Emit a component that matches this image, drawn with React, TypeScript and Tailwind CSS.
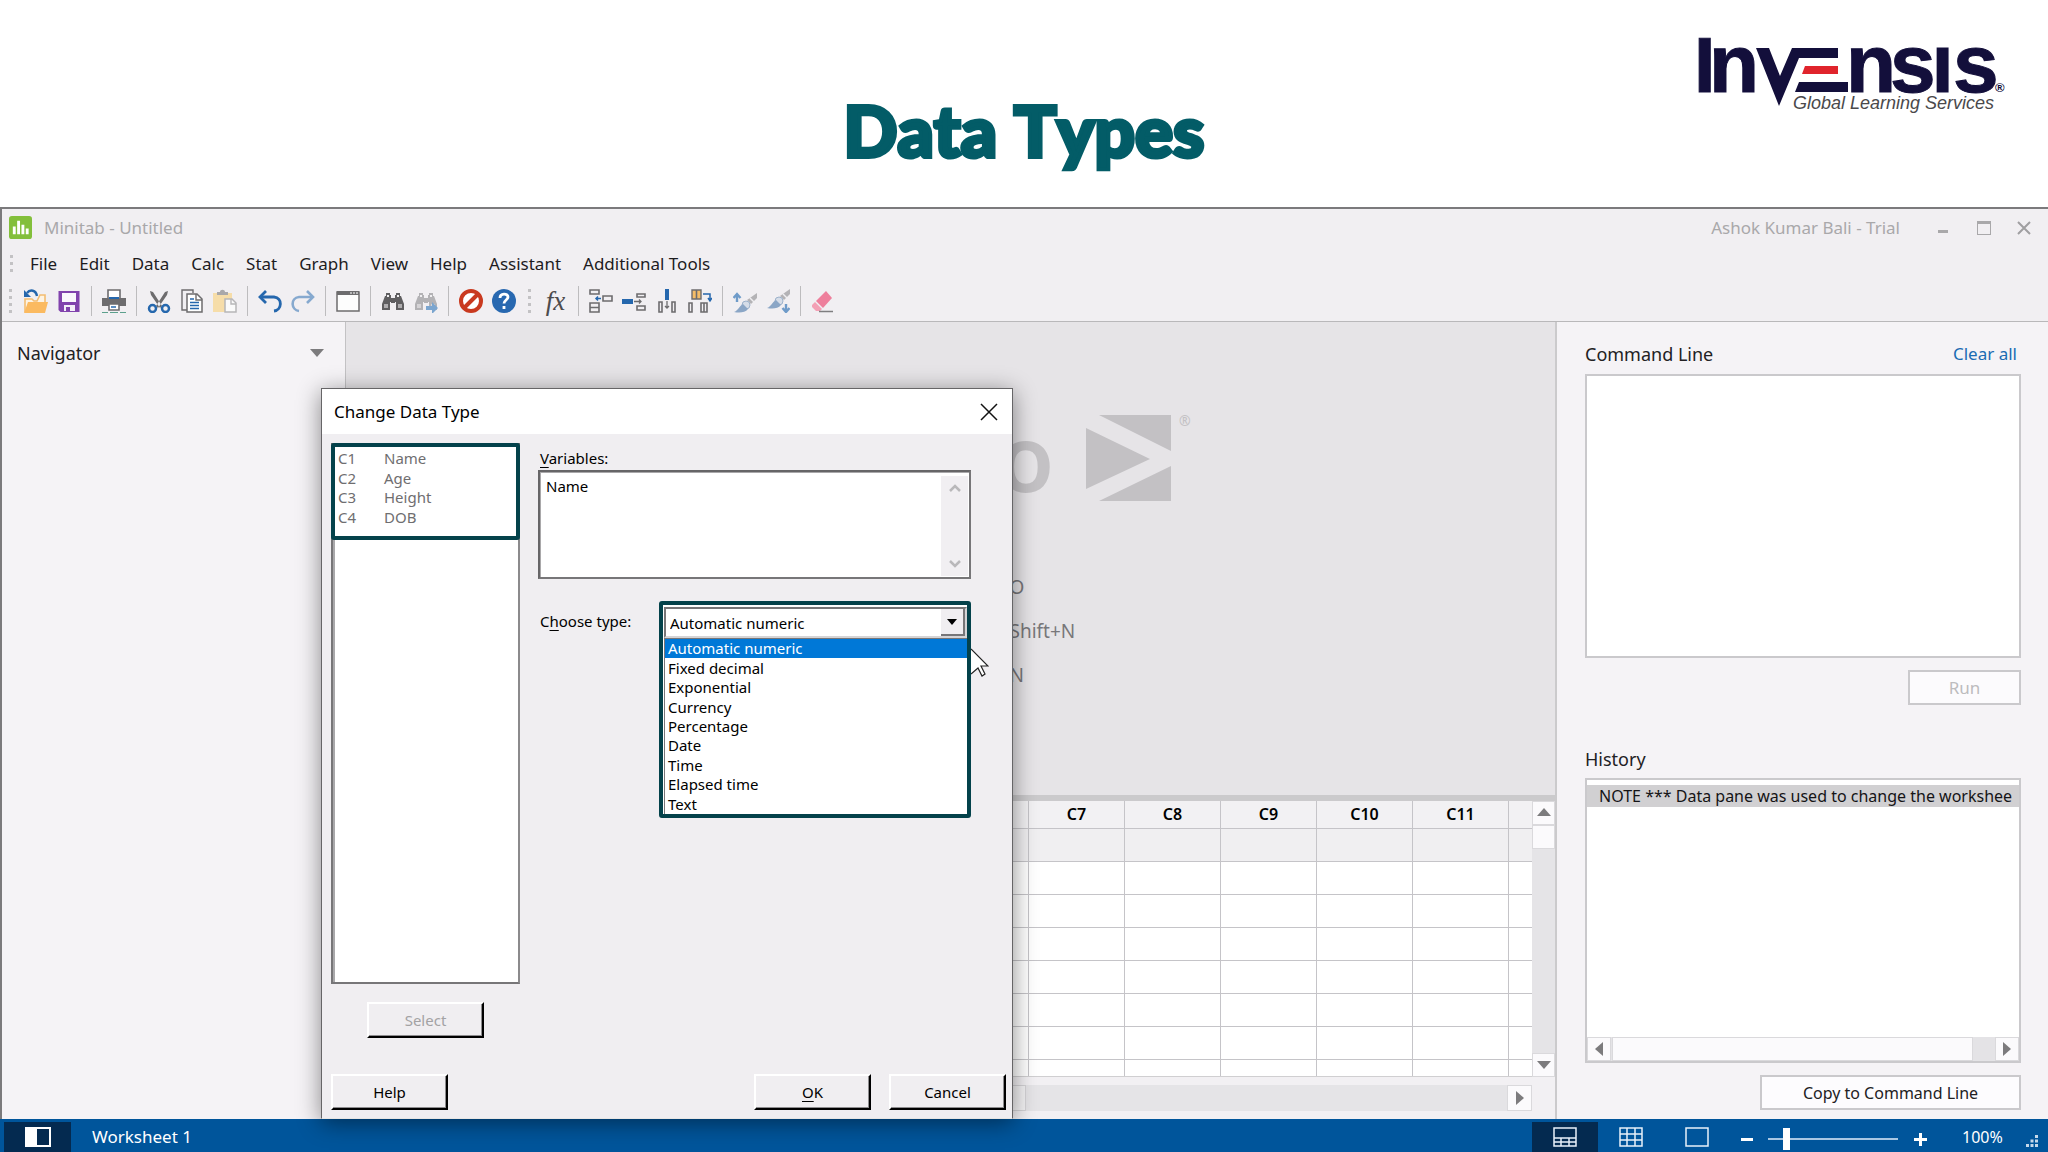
import React from "react";

const cx = (...parts: (string | false | undefined)[]) => parts.filter(Boolean).join(" ");

function Svg({ children, className = "size-6" }: { children: React.ReactNode; className?: string }) {
  return (
    <svg viewBox="0 0 24 24" className={cx("block shrink-0", className)} fill="none" aria-hidden="true">
      {children}
    </svg>
  );
}

const G = "#6d6c6e";
const B = "#2567ad";

const Binoculars = ({ color }: { color: string }) => (
  <g fill={color}>
    <path d="M5 4h4v2h1v7H9v8H1v-6l3-8h1zM19 4h-4v2h-1v7h1v8h8v-6l-3-8h-1z" />
    <path d="M10 9h4v5h-4z" />
    <path d="M3 15h4v4H3zM17 15h4v4h-4z" fill="#f0eff1" fillOpacity="0.55" />
    <path d="M6 6h2v2H6zM16 6h2v2h-2z" fill="#f0eff1" />
  </g>
);

const Brush = () => (
  <>
    <path d="M24 4v5l-6 6-4-4z" fill="#b4b3b6" />
    <path d="M17 9l4 4" stroke="#f0eff1" strokeWidth="1.5" />
    <circle cx="13" cy="16" r="4" fill="#d6dde8" stroke="#9db2cb" />
    <path d="M1 23c4-1 5-6 9-8l5 5c-3 4-9 4-14 3z" fill="#8ba6c6" />
  </>
);

const icons: Record<string, React.ReactNode> = {
  Open: (
    <Svg>
      <path d="M1 23V10h7l2 2h3l3-6h5v8" stroke="#f3bd72" strokeWidth="1.6" fill="#fdf3e3" />
      <path d="M0 24l4-11h20l-3 11z" fill="#fbba60" />
      <path d="M13 7c-1-6-7-7-10-3" stroke={B} strokeWidth="2.4" />
      <path d="M0 1v7h7z" fill={B} />
    </Svg>
  ),
  Save: (
    <Svg>
      <path d="M1.500 2h21v21h-19l-2-2z" fill="#8143ad" />
      <path d="M5 4h14v9H5z" fill="#faf7fc" />
      <path d="M7 16h11v6H7z" fill="#f4eff8" />
      <path d="M9 18h4v4H9z" fill="#8143ad" />
    </Svg>
  ),
  Print: (
    <Svg>
      <path d="M0 9h24v8H0z" fill={G} />
      <path d="M6 1h12v9H6z" fill="#fff" stroke={G} strokeWidth="1.600" />
      <path d="M7 8h10v2H7z" fill={B} />
      <path d="M7 15h10v6H7z" fill="#fff" stroke={G} strokeWidth="1.600" />
      <path d="M9 18h5" stroke={B} strokeWidth="1.500" />
      <path d="M0 23.500h6m2 0h8m2 0h6" stroke="#5ca08d" />
    </Svg>
  ),
  Cut: (
    <Svg>
      <path d="M3 2l3 1 9 14-2 2L4 6zM21 2l-3 1-9 14 2 2L20 6z" fill={G} />
      <circle cx="5.500" cy="19.500" r="3.500" stroke={B} strokeWidth="2.500" />
      <circle cx="18.500" cy="19.500" r="3.500" stroke={B} strokeWidth="2.500" />
    </Svg>
  ),
  Copy: (
    <Svg>
      <path d="M7 21H2V1h11v3" stroke={G} strokeWidth="1.400" />
      <path d="M7 5h10l5 5v13H7z" fill="#fff" stroke={G} strokeWidth="1.500" />
      <path d="M16 5v6h6" stroke={G} strokeWidth="1.400" />
      <path d="M10 10h4m-4 3.500h9m-9 3h9m-9 3h9" stroke={B} strokeWidth="1.400" />
    </Svg>
  ),
  Paste: (
    <Svg>
      <path d="M0 4h19v6h-6v13H0z" fill="#f6dda9" />
      <path d="M4 3h3c0-3 5-3 5 0h3v3H4z" fill="#a9a8aa" />
      <path d="M12 10h7l4 4v9H12z" fill="#fafafa" stroke="#b7b6b8" strokeWidth="1.500" />
      <path d="M18 10v5h5" stroke="#b7b6b8" strokeWidth="1.400" />
    </Svg>
  ),
  Undo: (
    <Svg>
      <path d="M2 8h14c9 1 8 13 0 14" stroke={B} strokeWidth="2.800" />
      <path d="M8 2L2 8l6 6" stroke={B} strokeWidth="2.800" />
    </Svg>
  ),
  Redo: (
    <Svg>
      <path d="M22 8H8c-9 1-8 13 0 14" stroke="#86a9cf" strokeWidth="2.600" />
      <path d="M16 2l6 6-6 6" stroke="#86a9cf" strokeWidth="2.600" />
    </Svg>
  ),
  "Show window": (
    <Svg>
      <path d="M1 3h22v19H1z" fill="#fdfdfd" stroke={G} strokeWidth="1.500" />
      <path d="M1 2h22v4H1z" fill={G} />
      <path d="M14 4h2m1 0h2m1 0h2" stroke="#fff" />
    </Svg>
  ),
  Find: <Svg><Binoculars color="#5f5e60" /></Svg>,
  "Find next": (
    <Svg>
      <Binoculars color="#b3b2b5" />
      <path d="M12 17h6v-4l6 6-6 6v-4h-6z" fill="#7ba5cf" />
    </Svg>
  ),
  Stop: (
    <Svg>
      <circle cx="12" cy="12" r="10" stroke="#c9391f" strokeWidth="4" fill="#fff" />
      <path d="M5 19L19 5" stroke="#c9391f" strokeWidth="4" />
    </Svg>
  ),
  "About help": (
    <Svg>
      <circle cx="12" cy="12" r="12" fill="#2868b0" />
      <path d="M8 9c0-5 8-5 8-1 0 3-4 3-4 6.500M12 17v3" stroke="#fff" strokeWidth="2.800" />
    </Svg>
  ),
  Formula: <span className="font-['Liberation_Serif'] text-[27px] leading-6 text-[#4c4b4d] italic">fx</span>,
  "Insert cells": (
    <Svg>
      <path d="M1 1h9v4H1zM1 14h9v9H1zM1 18.500h9M14 7h9v5h-9z" stroke={G} strokeWidth="1.600" />
      <path d="M12 9.500H7m2-2l-2 2 2 2" stroke={B} strokeWidth="1.500" />
    </Svg>
  ),
  "Insert row": (
    <Svg>
      <path d="M0 10h11v5H0z" fill={B} />
      <path d="M15 5h8v3h-8zM15 17h8v4h-8z" stroke={G} strokeWidth="1.600" />
      <path d="M12 12.500h7m-2-2l2 2-2 2" stroke={G} strokeWidth="1.300" />
    </Svg>
  ),
  "Insert column": (
    <Svg>
      <path d="M10 0h4v11h-4z" fill={B} />
      <path d="M4 13h3v10H4zM17 13h3v10h-3z" stroke={G} strokeWidth="1.600" />
      <path d="M12 12v7m-2-2l2 2 2-2" stroke={G} strokeWidth="1.300" />
    </Svg>
  ),
  "Move columns": (
    <Svg>
      <path d="M4 1h9v9H4z" fill="#f5bd68" stroke={G} strokeWidth="1.400" />
      <path d="M8.500 1v9M1 14h3v9H1zM13 14h6v9h-6zM16 14v9" stroke={G} strokeWidth="1.600" />
      <path d="M15 5h7v6m-2-2l2 3 2-3" stroke={B} strokeWidth="1.500" />
    </Svg>
  ),
  "Previous brushed row": (
    <Svg>
      <Brush />
      <path d="M4 13V6M0.500 9L4 5l3.500 4" stroke="#6f9bc9" strokeWidth="2.400" />
    </Svg>
  ),
  "Next brushed row": (
    <Svg>
      <g transform="translate(0 -4)"><Brush /></g>
      <path d="M20 15v7m-3.500-3l3.500 4 3.500-4" stroke="#6f9bc9" strokeWidth="2.400" />
    </Svg>
  ),
  Erase: (
    <Svg>
      <path d="M15 2l6 7-9 10-7-7z" fill="#ee7f9c" />
      <path d="M4 13l7 7-2 2H5l-4-4v-2z" fill="#f3a0b5" />
      <path d="M8 22.500h14" stroke="#7f7e80" strokeWidth="1.500" />
    </Svg>
  ),
};

const toolGroups: string[][] = [
  ["Open", "Save"],
  ["Print"],
  ["Cut", "Copy", "Paste"],
  ["Undo", "Redo"],
  ["Show window"],
  ["Find", "Find next"],
  ["Stop", "About help"],
];
const toolGroups2: string[][] = [
  ["Formula"],
  ["Insert cells", "Insert row", "Insert column", "Move columns"],
  ["Previous brushed row", "Next brushed row"],
  ["Erase"],
];

const menus = ["File", "Edit", "Data", "Calc", "Stat", "Graph", "View", "Help", "Assistant", "Additional Tools"];
const types = ["Automatic numeric", "Fixed decimal", "Exponential", "Currency", "Percentage", "Date", "Time", "Elapsed time", "Text"];
const variables = [["C1", "Name"], ["C2", "Age"], ["C3", "Height"], ["C4", "DOB"]];
const columns = ["C1", "C2", "C3", "C4", "C5", "C6", "C7", "C8", "C9", "C10", "C11", ""];

function ToolGroups({ groups }: { groups: string[][] }) {
  return (
    <>
      {groups.map((group, i) => (
        <React.Fragment key={i}>
          {i > 0 && (
            <div className="flex w-3 justify-center">
              <div className="h-[30px] w-px bg-[#bdbcbe]" />
            </div>
          )}
          {group.map((name) => (
            <button key={name} type="button" aria-label={name} className="flex h-[30px] w-[33px] items-center justify-center">
              {icons[name]}
            </button>
          ))}
        </React.Fragment>
      ))}
    </>
  );
}

function Grip({ dots, className }: { dots: number; className: string }) {
  return (
    <div className={cx("flex flex-col items-center gap-1", className)}>
      {Array.from({ length: dots }, (_, i) => (
        <div key={i} className="size-[3px] bg-[#c3c2c4]" />
      ))}
    </div>
  );
}

function Arrow({ dir, className }: { dir: "up" | "down" | "left" | "right"; className?: string }) {
  const d = { up: "M0 10h14L7 2z", down: "M0 3h14l-7 8z", left: "M11 0v14L3 7z", right: "M3 0v14l8-7z" }[dir];
  return (
    <svg viewBox="0 0 14 14" className={cx("block size-[14px]", className)} fill="#7c7b7d" aria-hidden="true">
      <path d={d} />
    </svg>
  );
}

function ScrollButton({ dir, label }: { dir: "up" | "down" | "left" | "right"; label: string }) {
  return (
    <button type="button" aria-label={label} className="flex h-6 w-full shrink-0 items-center justify-center border border-[#dad9dc] bg-[#fbfafc]">
      <Arrow dir={dir} />
    </button>
  );
}

function Logo() {
  return (
    <svg viewBox="-10 0 330 80" className="h-20 w-[330px] overflow-visible" role="img" aria-label="Invensis Global Learning Services">
      <g fill="#130f3b" fontFamily="Liberation Sans" fontWeight="700">
        <text x="-4" y="56" fontSize="77" stroke="#130f3b" strokeWidth="1">I</text>
        <text x="11" y="56" fontSize="82" stroke="#130f3b" strokeWidth="1">n</text>
        <text x="148" y="56" fontSize="82" stroke="#130f3b" strokeWidth="1">n</text>
        <text x="192" y="56" fontSize="82" stroke="#130f3b">s</text>
        <text x="236" y="55" fontSize="62" stroke="#130f3b" strokeWidth="3">I</text>
        <text x="255" y="56" fontSize="82" stroke="#130f3b">s</text>
        <text x="297" y="56" fontSize="13">®</text>
        <path d="M58 12h13l11 28 12-28h46v10h-39L81 70z" />
        <path d="M101 46h49v10H97z" />
      </g>
      <path d="M107 30h33v8h-36z" fill="#e0242c" />
      <text x="95" y="73" fontSize="18" fontStyle="italic" fontFamily="Liberation Sans" fill="#4a494b">
        Global Learning Services
      </text>
    </svg>
  );
}

function DialogButton({ children, disabled }: { children: React.ReactNode; disabled?: boolean }) {
  return (
    <button
      type="button"
      disabled={disabled}
      className={cx(
        "h-9 w-[117px] border-2 border-t-white border-r-black border-b-black border-l-white bg-[#f0eef1] text-[15px] leading-5 shadow-[inset_-1px_-1px_0_#8d8c8e]",
        disabled && "text-[#a3a2a4]",
      )}
    >
      {children}
    </button>
  );
}

function ChangeTypeDialog() {
  return (
    <section
      role="dialog"
      aria-labelledby="dialog-title"
      className="absolute top-[388px] bottom-[33px] left-[321px] flex w-[692px] flex-col border border-[#666567] border-b-[#e8e6e4] bg-[#f0eef1] text-black shadow-[0_4px_22px_rgba(0,0,0,0.45)]"
    >
      <header className="flex h-[45px] shrink-0 items-center justify-between bg-white pr-[14px] pl-3">
        <h2 id="dialog-title" className="text-[17px]">Change Data Type</h2>
        <button type="button" aria-label="Close" className="p-0">
          <svg viewBox="0 0 18 18" className="block size-[18px]" stroke="#111" strokeWidth="1.500" aria-hidden="true">
            <path d="M1 1l16 16M17 1L1 17" />
          </svg>
        </button>
      </header>
      <div className="flex min-h-0 flex-1 px-[9px] pt-[9px] pb-2">
        <div className="flex w-[189px] flex-col">
          <div className="relative min-h-0 flex-1 border-2 border-t-[#666567] border-r-[#8b8a8c] border-b-[#777678] border-l-[#777678] bg-white pt-1 shadow-[inset_2px_0_0_#a9a8aa]">
            <ul role="listbox" aria-label="Columns" className="grid h-[78px] auto-rows-fr text-[#6f6e70]">
              {variables.map(([id, name]) => (
                <li key={id} role="option" aria-selected="false" className="flex items-center pl-[5px] text-[15px] leading-none">
                  <span className="w-[46px]">{id}</span>
                  {name}
                </li>
              ))}
            </ul>
            <div className="pointer-events-none absolute -inset-x-[2px] -top-[2px] h-[97px] rounded-[3px] border-4 border-[#04424b]" />
          </div>
          <div className="flex justify-center pt-[18px]">
            <DialogButton disabled>Select</DialogButton>
          </div>
          <div className="pt-9">
            <DialogButton>Help</DialogButton>
          </div>
        </div>
        <div className="flex flex-1 flex-col pl-[18px]">
          <label htmlFor="vars" className="pt-[3px] pl-[2px] text-[15px] leading-6">
            <u className="underline-offset-[3px]">V</u>ariables:
          </label>
          <div className="flex h-[109px] w-[433px] shrink-0 border-2 border-t-[#666567] border-r-[#777678] border-b-[#777678] border-l-[#666567] bg-white shadow-[inset_1px_1px_0_#a9a8aa]">
            <textarea id="vars" defaultValue="Name" className="min-w-0 flex-1 resize-none overflow-hidden bg-transparent px-[6px] py-[2px] text-[15px] leading-6 outline-none" />
            <div className="mt-1 mr-px mb-px flex w-[27px] flex-col items-center justify-between bg-[#f1eff2] py-[7px]">
              <svg viewBox="0 0 12 10" className="h-[10px] w-3" fill="none" stroke="#b9b8ba" strokeWidth="2.500" aria-hidden="true"><path d="M1 8l5-5 5 5" /></svg>
              <svg viewBox="0 0 12 10" className="h-[10px] w-3" fill="none" stroke="#b9b8ba" strokeWidth="2.500" aria-hidden="true"><path d="M1 2l5 5 5-5" /></svg>
            </div>
          </div>
          <div className="flex pt-[22px]">
            <label htmlFor="type" className="w-[121px] pt-2 pl-[2px] text-[15px] leading-6">
              C<u className="underline-offset-[3px]">h</u>oose type:
            </label>
            <div className="relative w-[312px]">
              <div className="rounded-[3px] border-4 border-[#04424b] bg-white pt-[2px] pl-px">
                <div className="relative flex h-[31px] border-2 border-t-[#777678] border-r-[#d5d4d6] border-b-[#d5d4d6] border-l-[#777678] bg-white">
                  <select id="type" defaultValue={types[0]} className="min-w-0 flex-1 appearance-none bg-transparent pl-[4px] text-[15px] leading-6 outline-none">
                    {types.map((t) => <option key={t}>{t}</option>)}
                  </select>
                  <span className="pointer-events-none absolute inset-y-0 right-0 flex w-6 items-center justify-center border-r-2 border-b-2 border-[#777678] bg-[#f0eef1]">
                    <svg viewBox="0 0 10 6" className="h-[6px] w-[10px]" aria-hidden="true"><path d="M0 0h10L5 6z" /></svg>
                  </span>
                </div>
                <ul role="listbox" aria-label="Data types" className="grid h-[176px] auto-rows-fr border-t border-l border-[#777678]">
                  {types.map((t, i) => (
                    <li
                      key={t}
                      role="option"
                      aria-selected={i === 0}
                      className={cx("flex items-center pl-[3px] text-[15px] leading-none", i === 0 && "bg-[#0078d7] text-white")}
                    >
                      {t}
                    </li>
                  ))}
                </ul>
              </div>
              <svg viewBox="0 0 18 30" className="absolute top-[47px] left-full h-[30px] w-[18px]" aria-hidden="true">
                <path d="M0 1l17 17h-7l4 8-3 2-4-8-7 6z" fill="#fff" />
                <path d="M0 1l17 17h-7l4 8-3 2-4-8-7 6" fill="none" stroke="#222" strokeWidth="1.200" />
              </svg>
            </div>
          </div>
          <div className="mt-auto mr-[-3px] flex justify-end gap-[18px]">
            <DialogButton><u className="underline-offset-[3px]">O</u>K</DialogButton>
            <DialogButton>Cancel</DialogButton>
          </div>
        </div>
      </div>
    </section>
  );
}

function Worksheet() {
  return (
    <div className="flex h-[324px] shrink-0 flex-col border-t-[6px] border-[#cbcacc] bg-[#f2f0f3]">
      <div className="flex h-[276px]">
        <div className="min-w-0 flex-1 overflow-hidden border-b border-[#d0cfd1]">
          <table className="w-[1258px] table-fixed border-collapse bg-white text-base text-black">
            <colgroup>
              <col className="w-[106px]" />
              {columns.map((c, i) => <col key={i} className="w-24" />)}
            </colgroup>
            <thead>
              <tr className="h-[27px] bg-[#f2f1f3]">
                <th className="border border-t-0 border-[#c5c4c8]" />
                {columns.map((c, i) => (
                  <th key={i} scope="col" className="border border-t-0 border-[#c5c4c8] p-0 pb-px leading-5 font-semibold">{c}</th>
                ))}
              </tr>
            </thead>
            <tbody>
              {Array.from({ length: 8 }, (_, r) => (
                <tr key={r} className={cx("h-[33px]", r === 0 && "bg-[#f0eff1]")}>
                  <td className="border border-[#c5c4c8]" />
                  {columns.map((c, i) => <td key={i} className="border border-[#c5c4c8]" />)}
                </tr>
              ))}
            </tbody>
          </table>
        </div>
        <div className="flex w-[23px] flex-col bg-[#e5e4e7]">
          <ScrollButton dir="up" label="Scroll up" />
          <div className="h-6 border border-[#dad9dc] bg-[#fbfafc]" />
          <div className="flex-1" />
          <ScrollButton dir="down" label="Scroll down" />
        </div>
      </div>
      <div className="mt-2 mr-[23px] flex h-[26px] justify-between bg-[#e5e4e7]">
        <div className="w-[680px] border border-[#d5d4d7] bg-[#f4f3f5]" />
        <button type="button" aria-label="Scroll right" className="flex w-[25px] items-center justify-center border border-[#dad9dc] bg-[#fbfafc]">
          <Arrow dir="right" />
        </button>
      </div>
    </div>
  );
}

function Workspace() {
  return (
    <main className="flex min-w-0 flex-1 flex-col bg-[#e6e4e7]">
      <div className="relative flex-1">
        <div className="absolute top-[93px] left-[643px] flex">
          <span className="w-[74px] text-center text-[92px] leading-[84px] font-semibold text-[#c3c1c4]">o</span>
          <svg viewBox="0 0 110 90" className="ml-[23px] h-[90px] w-[110px] overflow-visible" fill="#c3c1c4" role="img" aria-label="Minitab logo">
            <path d="M13 0h72v36zM0 13l64 31L0 74zM85 51v35H13z" />
            <text x="93" y="11" fontSize="14" fontFamily="Noto Sans">®</text>
          </svg>
        </div>
        <ul className="absolute top-[243px] left-[621px] text-[19px] leading-[44px] text-[#78777a]">
          <li>Ctrl+O</li>
          <li>Ctrl+Shift+N</li>
          <li>Ctrl+N</li>
        </ul>
      </div>
      <Worksheet />
    </main>
  );
}

function CommandPanel() {
  return (
    <aside className="flex w-[493px] shrink-0 flex-col border-l-2 border-[#cbcacc] bg-[#f5f3f6] pr-[27px] pb-[9px] pl-7 text-[#222123]">
      <div className="flex items-center justify-between pt-5 pr-1">
        <label htmlFor="cmd" className="text-lg leading-6">Command Line</label>
        <a href="#clear" className="text-[17px] leading-6 text-[#1b6cb3]">Clear all</a>
      </div>
      <textarea id="cmd" className="mt-2 h-[284px] w-full resize-none border-2 border-[#cac9cc] bg-white outline-none" />
      <button type="button" disabled className="mt-3 h-[35px] w-[113px] self-end border-2 border-[#cac9cc] bg-[#fcfbfd] text-[17px] leading-5 text-[#bdbcbe]">Run</button>
      <h2 className="mt-[42px] text-lg leading-6">History</h2>
      <div className="mt-[7px] flex min-h-0 flex-1 flex-col border-2 border-[#cac9cc] bg-white">
        <div className="mt-[5px] bg-[#d1d0d2] pl-3 text-base leading-[22px] whitespace-nowrap text-[#151416]">
          NOTE *** Data pane was used to change the workshee
        </div>
        <div className="mt-auto flex h-6 bg-[#e4e3e6]">
          <div className="w-6"><ScrollButton dir="left" label="Scroll left" /></div>
          <div className="ml-px flex-1 border border-[#dad9dc] bg-[#fbfafc]" />
          <div className="ml-[22px] w-6"><ScrollButton dir="right" label="Scroll right" /></div>
        </div>
      </div>
      <button type="button" className="mt-3 h-[35px] w-[261px] self-end border-2 border-[#cac9cc] bg-[#fdfcfe] text-base leading-5">Copy to Command Line</button>
    </aside>
  );
}

function StatusBar() {
  return (
    <footer className="flex h-[33px] shrink-0 items-end justify-between bg-[#00559b] pl-1 text-white">
      <div className="flex h-[30px] items-center gap-[21px]">
        <button type="button" aria-label="Toggle navigator" className="flex h-[30px] w-[67px] items-center justify-center bg-[#042a50]">
          <svg viewBox="0 0 26 20" className="h-5 w-[26px]" fill="none" stroke="#fff" strokeWidth="2" aria-hidden="true">
            <path d="M1 1h24v18H1z" /><path d="M1 1h10v18H1z" fill="#fff" />
          </svg>
        </button>
        <span className="text-[17px] leading-6">Worksheet 1</span>
      </div>
      <div className="flex h-[30px] items-center pr-[10px]">
        <button type="button" aria-label="Split view" className="flex h-[30px] w-[66px] items-center justify-center bg-[#042a50]">
          <svg viewBox="0 0 24 20" className="h-5 w-6" fill="none" stroke="#e8f1fa" strokeWidth="1.500" aria-hidden="true">
            <path d="M1 1h22v18H1zM1 11h22M1 15h22M8 11v8M16 11v8" />
          </svg>
        </button>
        <button type="button" aria-label="Data view" className="flex h-[30px] w-[66px] items-center justify-center">
          <svg viewBox="0 0 24 20" className="h-5 w-6" fill="none" stroke="#e8f1fa" strokeWidth="1.500" aria-hidden="true">
            <path d="M1 1h22v18H1zM1 7h22M1 13h22M8 1v18M16 1v18" />
          </svg>
        </button>
        <button type="button" aria-label="Output view" className="flex h-[30px] w-[66px] items-center justify-center">
          <svg viewBox="0 0 24 20" className="h-5 w-6" fill="none" stroke="#e8f1fa" strokeWidth="1.500" aria-hidden="true">
            <path d="M1 1h22v18H1z" />
          </svg>
        </button>
        <button type="button" aria-label="Zoom out" className="ml-[11px] flex w-3 items-center pt-1"><span className="h-[3px] w-3 bg-white" /></button>
        <input
          type="range"
          aria-label="Zoom"
          min={0}
          max={100}
          defaultValue={12}
          className="mt-[3px] ml-[15px] h-[22px] w-[130px] appearance-none bg-transparent [&::-webkit-slider-runnable-track]:h-[2px] [&::-webkit-slider-runnable-track]:bg-[#a9c7e3] [&::-webkit-slider-thumb]:mt-[-10px] [&::-webkit-slider-thumb]:h-[22px] [&::-webkit-slider-thumb]:w-[7px] [&::-webkit-slider-thumb]:appearance-none [&::-webkit-slider-thumb]:bg-white"
        />
        <button type="button" aria-label="Zoom in" className="ml-4 pt-1">
          <svg viewBox="0 0 13 13" className="block size-[13px]" stroke="#fff" strokeWidth="3" aria-hidden="true"><path d="M0 6.500h13M6.500 0v13" /></svg>
        </button>
        <span className="ml-[35px] w-[42px] text-base">100%</span>
        <svg viewBox="0 0 12 12" className="mt-2 ml-[22px] size-3" fill="#c5d8ea" aria-hidden="true">
          <path d="M9 0h3v3H9zM9 4.500h3v3H9zM9 9h3v3H9zM4.500 4.500h3v3h-3zM4.500 9h3v3h-3zM0 9h3v3H0z" />
        </svg>
      </div>
    </footer>
  );
}

export default function App() {
  return (
    <div className="relative flex h-screen min-h-[1000px] flex-col overflow-hidden bg-white font-['Noto_Sans',sans-serif]">
      <header className="relative flex h-[207px] shrink-0 items-start justify-center pt-[85px]">
        <h1 className="text-[71px] leading-[90px] font-black text-[#035c67] [font-kerning:none] font-['Lato',sans-serif] [-webkit-text-stroke:4px_#035c67]">Data Types</h1>
        <div className="absolute top-9 right-[30px]"><Logo /></div>
      </header>
      <div className="flex min-h-0 flex-1 flex-col border-t-2 border-l-2 border-[#7b7a7c] bg-[#f1eff2]">
        <div className="flex h-[37px] shrink-0 items-center justify-between pr-[17px] pl-[7px] text-[#a9a8aa]">
          <div className="flex items-center gap-3">
            <Svg className="size-[23px]">
              <rect width="24" height="24" rx="3" fill="#83bf3b" />
              <path d="M4 11h3v8H4zM8.500 5h3v14h-3zM13 9h3v10h-3zM17.500 13h3v6h-3z" fill="#fff" />
            </Svg>
            <span className="text-[17px]">Minitab - Untitled</span>
          </div>
          <div className="flex items-center">
            <span className="pt-px text-[17px]">Ashok Kumar Bali - Trial</span>
            <button type="button" aria-label="Minimize" className="mt-2 ml-[38px] h-[3px] w-[10px] bg-[#a9a8aa]" />
            <button type="button" aria-label="Maximize" className="ml-[29px] h-[14px] w-[14px] border border-t-[3px] border-[#a9a8aa]" />
            <button type="button" aria-label="Close window" className="ml-[26px]">
              <svg viewBox="0 0 14 14" className="block size-[14px]" stroke="#a09fa1" strokeWidth="2" aria-hidden="true"><path d="M1 1l12 12M13 1L1 13" /></svg>
            </button>
          </div>
        </div>
        <nav className="flex h-[35px] shrink-0 items-center text-[#1d1c1e]">
          <Grip dots={3} className="w-[18px]" />
          <div className="flex gap-[22px] pl-[10px]">
            {menus.map((m) => (
              <button key={m} type="button" className="text-[17px] leading-6">{m}</button>
            ))}
          </div>
        </nav>
        <div className="flex h-[41px] shrink-0 items-center border-b border-[#b9b8ba]">
          <Grip dots={4} className="w-[17px]" />
          <ToolGroups groups={toolGroups} />
          <Grip dots={4} className="w-[19px]" />
          <ToolGroups groups={toolGroups2} />
        </div>
        <div className="flex min-h-0 flex-1">
          <aside className="w-[344px] shrink-0 border-r border-[#c3c2c4] bg-[#f5f3f6] pt-[17px] pr-[21px] pl-[15px]">
            <div className="flex items-center justify-between">
              <h2 className="text-lg leading-7 text-[#222123]">Navigator</h2>
              <button type="button" aria-label="Navigator menu"><Arrow dir="down" /></button>
            </div>
          </aside>
          <Workspace />
          <CommandPanel />
        </div>
      </div>
      <StatusBar />
      <ChangeTypeDialog />
    </div>
  );
}
